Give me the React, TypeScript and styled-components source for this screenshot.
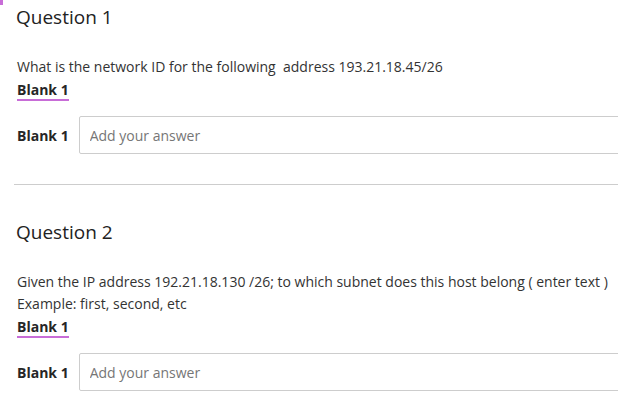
import React from 'react'
import { styled, createGlobalStyle } from 'styled-components'

const GlobalStyle = createGlobalStyle`
    html, body {
        margin: 0;
        padding: 0;
        background: #ffffff;
        overflow: hidden;
    }
    body {
        font-family: "Open Sans", "Noto Sans", sans-serif;
        color: #262626;
    }
`

const Page = styled.div`
    position: relative;
    width: 660px;
    padding-left: 14px;
    box-sizing: border-box;
`

const FocusMark = styled.div`
    position: absolute;
    top: 0;
    left: 0;
    width: 3px;
    height: 5px;
    background: #c86dd7;
`

const Question = styled.section<{ $first?: boolean }>`
    padding: ${p => (p.$first ? '5px' : '35px')} 0 30px 3px;
    border-top: ${p => (p.$first ? 'none' : '1px solid #cdcdcd')};
`

const Title = styled.h2`
    margin: 0 0 27px -1px;
    font-size: 19px;
    line-height: 24px;
    font-weight: 400;
    color: #222222;
`

const Prompt = styled.p`
    margin: 0;
    font-size: 14px;
    line-height: 22px;
    color: #333333;
    white-space: pre-wrap;
`

const BlankTag = styled.span`
    display: block;
    width: fit-content;
    margin-top: 3px;
    font-size: 14px;
    line-height: 18px;
    font-weight: 700;
    color: #262626;
    border-bottom: 2px solid #c86dd7;
`

const AnswerRow = styled.div`
    display: flex;
    align-items: center;
    gap: 10px;
    margin-top: 15px;
`

const AnswerLabel = styled.label`
    font-size: 14px;
    font-weight: 700;
    color: #262626;
`

const AnswerInput = styled.input`
    flex: 1;
    height: 38px;
    box-sizing: border-box;
    padding: 0 10px;
    border: 1px solid #cdcdcd;
    border-radius: 2px;
    font-family: "Open Sans", "Noto Sans", sans-serif;
    font-size: 14px;
    color: #262626;
    outline: none;

    &::placeholder {
        color: #767676;
    }
`

const questions = [
    {
        title: 'Question 1',
        lines: ['What is the network ID for the following  address 193.21.18.45/26'],
    },
    {
        title: 'Question 2',
        lines: [
            'Given the IP address 192.21.18.130 /26; to which subnet does this host belong ( enter text )',
            'Example: first, second, etc',
        ],
    },
]

const App: React.FC = () => {
    return (<>
        <GlobalStyle />
        <Page>
            <FocusMark />
            {questions.map((q, i) => (
                <Question key={q.title} $first={i === 0}>
                    <Title>{q.title}</Title>
                    {q.lines.map(line => (
                        <Prompt key={line}>{line}</Prompt>
                    ))}
                    <BlankTag>Blank 1</BlankTag>
                    <AnswerRow>
                        <AnswerLabel>Blank 1</AnswerLabel>
                        <AnswerInput placeholder="Add your answer" />
                    </AnswerRow>
                </Question>
            ))}
        </Page>
    </>
    )
}

export default App
